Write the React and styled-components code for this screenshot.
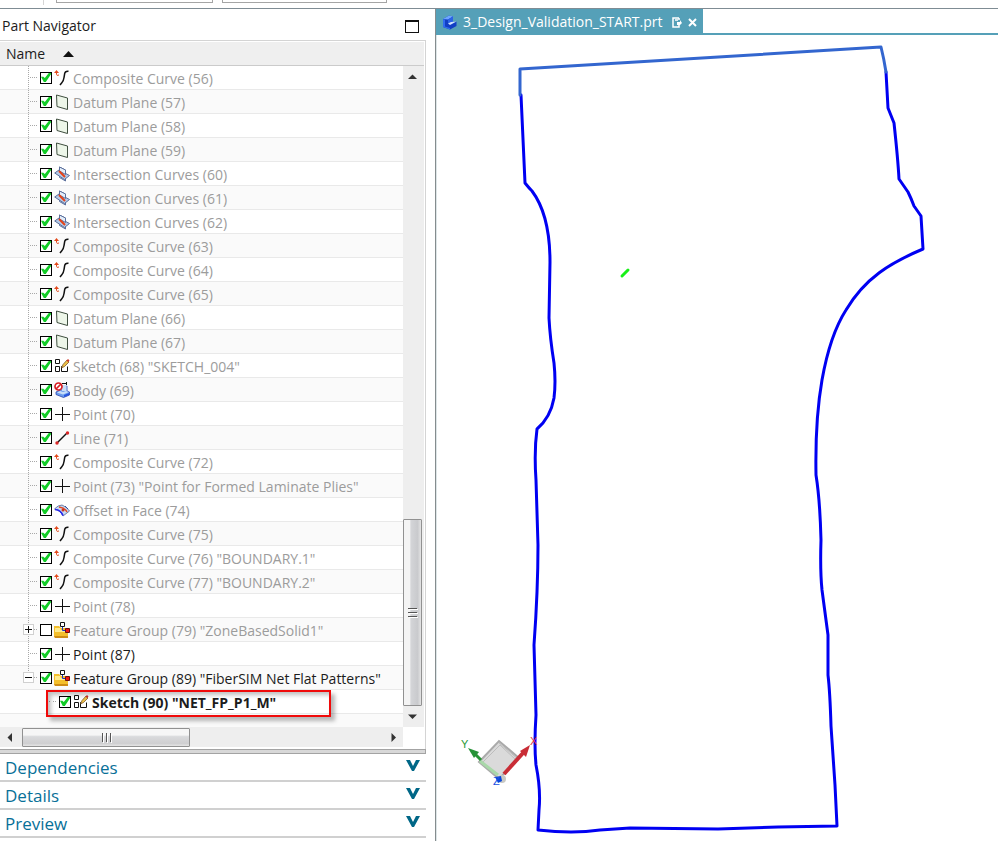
import React, { useState } from "react";
import styled, { createGlobalStyle, css } from "styled-components";

const GlobalStyle = createGlobalStyle`
  *, *::before, *::after { box-sizing: border-box; }
  body { margin: 0; background: #fff; }
  button { font: inherit; color: inherit; background: none; border: 0; padding: 0; }
  ul { list-style: none; margin: 0; padding: 0; }
`;

const Window = styled.div`
  display: flex;
  flex-direction: column;
  min-height: 100vh;
  overflow: hidden;
  font-family: "Open Sans", "Noto Sans", sans-serif;
  font-size: 14px;
  line-height: 24px;
  color: #1c1c1c;
`;

const Toolbar = styled.div`
  display: flex;
  align-items: flex-start;
  height: 9px;
  border-bottom: 1px solid #7f8c94;
`;

const ToolbarDivider = styled.div`
  width: 1px;
  height: 5px;
  margin: 0 12px 0 43px;
  background: #d5d5d5;
`;

const ToolbarField = styled.div`
  width: ${(p) => (p.$wide ? "165px" : "157px")};
  height: 3px;
  margin-right: 9px;
  border: 1px solid #a5a5a5;
  border-top: 0;
`;

const Workspace = styled.div`
  display: flex;
  flex: 1;
`;

const Navigator = styled.aside`
  display: flex;
  flex-direction: column;
  flex: 0 0 436px;
  padding-right: 9px;
  border-right: 1px solid #858c8e;
`;

const TitleBar = styled.header`
  display: flex;
  align-items: center;
  justify-content: space-between;
  height: 31px;
  padding: 3px 7px 0 2px;
`;

const Title = styled.h1`
  margin: 0;
  font-size: 14px;
  font-weight: 400;
`;

const MaximizeButton = styled.button`
  width: 14px;
  height: 13px;
  border: 1px solid #111;
  border-top-width: 2px;
`;

const TreePanel = styled.section`
  border-top: 1px solid #d4d4d4;
  border-right: 1px solid #d4d4d4;
  padding: 1px 1px 2px 0;
`;

const ColumnHeader = styled.button`
  display: flex;
  align-items: center;
  gap: 18px;
  width: 100%;
  height: 24px;
  padding: 1px 6px 0;
  background: #efefef;
  border-bottom: 1px solid #cbcbcb;
`;

const TreeBody = styled.div`
  display: grid;
  grid-template-columns: 1fr 21px;
`;

const TreeList = styled.ul`
  padding-bottom: 13px;
  background: #fafafa;
`;

const TreeRow = styled.li`
  position: relative;
  display: flex;
  align-items: center;
  height: 24px;
  padding-left: ${(p) => (p.$nested ? "47px" : "23px")};
  border-bottom: 1px solid #e9e9e9;
  background: #fff;
  color: ${(p) => (p.$active ? "#1c1c1c" : "#9c9c9c")};
  font-weight: ${(p) => (p.$nested ? 700 : 400)};
  &:nth-child(even) { background: #fafafa; }
`;

const dots = "#b0b0b0 1px, transparent 1px, transparent 2px";

const Branch = styled.span`
  display: flex;
  align-items: center;
  justify-content: center;
  width: 11px;
  height: 24px;
  background: repeating-linear-gradient(to bottom, #a0a0a0 0, ${dots}) 5px 0 / 1px
    ${(p) => (p.$last ? "12px" : "24px")} no-repeat;
`;

const Twig = styled.span`
  width: ${(p) => (p.$long ? "8px" : "4px")};
  height: 1px;
  margin: 0 2px 0 ${(p) => (p.$long ? "-4px" : "0")};
  background: repeating-linear-gradient(to right, #a0a0a0 0, ${dots});
`;

const Expander = styled.button`
  width: 11px;
  height: 11px;
  border: 1px solid #d0d0d0;
  color: #111;
  background:
    linear-gradient(currentColor, currentColor) center / 7px 1px no-repeat,
    ${(p) => (p.$open ? "" : "linear-gradient(currentColor, currentColor) center / 1px 7px no-repeat,")}
    linear-gradient(#fff, #fff);
`;

const ItemLabel = styled.label`
  display: flex;
  align-items: center;
  white-space: nowrap;
`;

const ItemText = styled.span`
  padding-top: 2px;
`;

const CheckBox = styled.input`
  appearance: none;
  flex: none;
  width: 12px;
  height: 12px;
  margin: 0 2px 0 0;
  border: 1px solid #000;
  outline: 0;
  background: #fff;
  &:checked::before {
    content: "";
    display: block;
    width: 10px;
    height: 10px;
    background: #12cc27;
    clip-path: polygon(0 42%, 24% 42%, 38% 56%, 78% 4%, 100% 4%, 100% 18%, 48% 94%, 28% 94%);
  }
`;

const Glyph = styled.svg`
  flex: none;
  width: 16px;
  height: 16px;
  margin-right: 3px;
`;

const Callout = styled.span`
  position: absolute;
  top: 0;
  left: 46px;
  width: 285px;
  height: 27px;
  z-index: 1;
  border: 2px solid #f00a0a;
  box-shadow: 4px 4px 4px #00000045, inset 3px 3px 4px #00000040;
  pointer-events: none;
`;

const Scrollbar = styled.div`
  display: flex;
  align-items: center;
  background: #eeeeee;
  ${(p) =>
    p.$vertical
      ? css`
          flex-direction: column;
          align-items: flex-start;
        `
      : css`
          height: 20px;
          margin-right: 21px;
        `}
`;

const Arrow = styled.button`
  display: flex;
  align-items: center;
  justify-content: center;
  flex: none;
  width: 19px;
  height: ${(p) => (p.$tall ? "21px" : "19px")};
`;

const Space = styled.div`
  flex: 1;
`;

const Thumb = styled.div`
  display: flex;
  align-items: center;
  justify-content: center;
  gap: 3px;
  flex: none;
  border: 1px solid #919191;
  border-radius: 1px;
  ${(p) =>
    p.$vertical
      ? css`
          flex-direction: column;
          width: 19px;
          height: 187px;
          background: linear-gradient(to right, #f4f4f4 35%, #d4d5d8 40%, #c9cacd 80%, #e4e4e4);
        `
      : css`
          width: 168px;
          height: 19px;
          margin-left: 3px;
          background: linear-gradient(#f6f6f6 35%, #d9dadc 45%, #cfcfd1 85%, #e5e5e5);
        `}
`;

const Grip = styled.i`
  width: ${(p) => (p.$vertical ? "9px" : "1px")};
  height: ${(p) => (p.$vertical ? "1px" : "9px")};
  background: #555;
  box-shadow: 1px 1px 0 #fff;
`;

const Splitter = styled.div`
  height: 5px;
  border: 1px solid #a3a3a3;
  border-left: 0;
  background: #d8d8d8;
`;

const Section = styled.button`
  display: flex;
  align-items: center;
  justify-content: space-between;
  height: 28px;
  padding: 2px 6px 0 5px;
  border-bottom: 2px solid #d0d0d0;
  color: #087098;
  font-size: 17px;
`;

const Chevron = styled.svg`
  width: 14px;
  height: 12px;
  margin-bottom: 4px;
`;

const Graphics = styled.main`
  flex: 1;
  min-width: 0;
`;

const TabStrip = styled.nav`
  display: flex;
  height: 26px;
  border-bottom: 2px solid #55a0b8;
`;

const Tab = styled.div`
  display: flex;
  align-items: center;
  gap: 6px;
  height: 26px;
  padding: 0 5px 0 6px;
  background: #55a0b8;
  color: #fff;
  white-space: nowrap;
`;

const TabTitle = styled.span`
  padding-right: 4px;
`;

const TabButton = styled.button`
  display: flex;
  width: 10px;
  height: 12px;
  align-items: center;
`;

const Canvas = styled.svg`
  display: block;
  width: 100%;
`;

const icons = {
  composite: (
    <>
      <path d="M2.500 1v3.500q0 1.500 2.500.5" fill="none" stroke="#e34a1c" />
      <path d="M0 3l2.500-3L5 3z" fill="#e34a1c" />
      <path d="M14.500 1.300Q11 1 10.700 3.500L10 7.500Q9.500 11 8 12.500L6 15" fill="none" stroke="#111" strokeWidth="1.500" />
    </>
  ),
  plane: <path d="M2.500 1l11 3v11.500l-10.500-3z" fill="#edf6e9" stroke="#3f4f3f" strokeWidth="1" />,
  intersect: (
    <>
      <path d="M5.500 1l6 3v11l-6-3.500z" fill="#c9daf0" stroke="#5b6f9c" />
      <path d="M.7 7L5 4l10.500 5.500-5 4z" fill="#b4cae8" stroke="#5b6f9c" />
      <path d="M5.500 1l6 3v4.500l-6-3.500z" fill="#e2edf9" stroke="#5b6f9c" />
      <path d="M5 5l6 6" stroke="#e64116" strokeWidth="2" />
    </>
  ),
  sketch: (
    <>
      <path d="M1.500 1.500h4v4h-4zM1.500 8.500h4v5h-4zM8 8.500h-.5v5h6v-5" fill="#fff" stroke="#111" />
      <path d="M7.500 10l1.500-3.500L13 2l2 2-4.500 4.500z" fill="#ecc046" stroke="#70481e" strokeWidth=".7" />
      <path d="M12.500 2.500l1.500-1.500 1.500 1.500L14 4z" fill="#cf342a" />
    </>
  ),
  body: (
    <>
      <path d="M2 10l4-2V4h7v5l2.500 1v3l-6 2.500L2 12.500z" fill="#6b9ced" stroke="#2945ae" strokeWidth=".8" />
      <path d="M8 3h4.500v6H8zM3 10.500l6 2 6-2.500-3-1-3 1-3-1z" fill="#c7def8" />
      <path d="M10 13l5-2v2l-5 2z" fill="#2654df" />
      <path d="M8 1.500h5M12.500 0v3" stroke="#111" />
      <circle cx="4.500" cy="4.500" r="3.500" fill="#fff" stroke="#d81e22" strokeWidth="1.700" />
      <path d="M7 2L2 7" stroke="#d81e22" strokeWidth="1.700" />
    </>
  ),
  point: <path d="M8.500 1v14M1 8.500h15" stroke="#111" strokeWidth="1" shapeRendering="crispEdges" />,
  line: (
    <>
      <path d="M3 13L13 3" stroke="#111" strokeWidth="1.500" />
      <circle cx="3" cy="13" r="1.700" fill="#da2626" />
      <circle cx="13.500" cy="3" r="1.700" fill="#da2626" />
    </>
  ),
  offset: (
    <>
      <path d="M.5 7Q4 3 8 3q5 2 7.500 6L9 14Q6 8 .5 7z" fill="#c6d8f1" stroke="#7082a8" />
      <path d="M1 7.500q6 .5 8 6" fill="none" stroke="#2424ee" strokeWidth="1.700" />
      <path d="M5 5q6 1 8 5" fill="none" stroke="#e34a24" strokeWidth="1.500" />
      <circle cx="9" cy="8" r="1.500" fill="#c9341f" />
      <path d="M11 4l3 3" stroke="#354f9e" />
    </>
  ),
  group: (
    <>
      <path d="M0 4h5l2 2h7v10H1L0 14z" fill="#f4bf2c" />
      <path d="M1 6h5l1 2h6v2H1z" fill="#ffeb8c" />
      <path d="M0 14h14v2H1z" fill="#cf8c14" />
      <path d="M8.500 4v4.500H12" fill="none" stroke="#1735c7" />
      <path d="M6.500.5h4v4h-4z" fill="#fff" stroke="#111" />
      <path d="M11.500 6.500h4v4h-4z" fill="#ee1515" stroke="#680e0e" />
    </>
  ),
};

const Icon = ({ kind }) => (
  <Glyph viewBox="0 0 16 16" aria-hidden="true">{icons[kind]}</Glyph>
);

const item = (kind, text, extra) => ({ kind, text, ...extra });
const items = [
  item("composite", "Composite Curve (56)"),
  item("plane", "Datum Plane (57)"),
  item("plane", "Datum Plane (58)"),
  item("plane", "Datum Plane (59)"),
  item("intersect", "Intersection Curves (60)"),
  item("intersect", "Intersection Curves (61)"),
  item("intersect", "Intersection Curves (62)"),
  item("composite", "Composite Curve (63)"),
  item("composite", "Composite Curve (64)"),
  item("composite", "Composite Curve (65)"),
  item("plane", "Datum Plane (66)"),
  item("plane", "Datum Plane (67)"),
  item("sketch", 'Sketch (68) "SKETCH_004"'),
  item("body", "Body (69)"),
  item("point", "Point (70)"),
  item("line", "Line (71)"),
  item("composite", "Composite Curve (72)"),
  item("point", 'Point (73) "Point for Formed Laminate Plies"'),
  item("offset", "Offset in Face (74)"),
  item("composite", "Composite Curve (75)"),
  item("composite", 'Composite Curve (76) "BOUNDARY.1"'),
  item("composite", 'Composite Curve (77) "BOUNDARY.2"'),
  item("point", "Point (78)"),
  item("group", 'Feature Group (79) "ZoneBasedSolid1"', { off: true, group: "closed" }),
  item("point", "Point (87)", { active: true }),
  item("group", 'Feature Group (89) "FiberSIM Net Flat Patterns"', { active: true, group: "open" }),
  item("sketch", 'Sketch (90) "NET_FP_P1_M"', { active: true, nested: true }),
];

function TreeItem({ data }) {
  const [checked, setChecked] = useState(!data.off);
  return (
    <TreeRow $active={data.active} $nested={data.nested}>
      {!data.nested && (
        <Branch $last={data.group === "open"}>
          {data.group && (
            <Expander
              $open={data.group === "open"}
              aria-label={data.group === "open" ? "Collapse" : "Expand"}
            />
          )}
        </Branch>
      )}
      <Twig $long={!data.group && !data.nested} />
      {data.nested && <Twig />}
      <ItemLabel>
        <CheckBox type="checkbox" checked={checked} onChange={(e) => setChecked(e.target.checked)} />
        <Icon kind={data.kind} />
        <ItemText>{data.text}</ItemText>
      </ItemLabel>
      {data.nested && <Callout />}
    </TreeRow>
  );
}

const arrowPaths = {
  up: "M0 7l4.500-4.500L9 7z",
  down: "M0 2.500h9L4.500 7z",
  left: "M7 0v9L2.500 4.500z",
  right: "M2.500 0v9L7 4.500z",
};

const ScrollArrow = ({ dir }) => (
  <Arrow $tall={dir === "up" || dir === "down"} aria-label={`Scroll ${dir}`}>
    <svg width="9" height="9" aria-hidden="true"><path d={arrowPaths[dir]} fill="#333" /></svg>
  </Arrow>
);

const Grips = ({ vertical }) => [0, 1, 2].map((n) => <Grip key={n} $vertical={vertical} />);

function Drawing() {
  return (
    <Canvas viewBox="436 35 562 806" role="img" aria-label="Net flat pattern">
      <path d="M436.500 35V841" stroke="#dde5e7" />
      <g fill="none" stroke="#0000f2" strokeWidth="3" strokeLinejoin="round" strokeLinecap="round">
        <path d="M521 95L525 183Q529 188 532 191C544 207 550 232 550 262L549 318Q550 338 554 363Q556 382 554 398C551 415 544 423 537 429Q534 451 536 480L538 545Q538 590 534 645L536 715Q534 745 536 765Q541 790 539 810L538 830Q573 834 600 830L630 828L718 829L778 827L837 826L835 785L831 726Q830 692 828 675L828 635L822 590Q820 570 821 540Q820 500 816 475Q815 420 822 380Q830 335 846 310C865 278 890 263 923 249L921 216L914 206Q911 198 908 192L899 179Q898 160 894 123L888 108L886 72" />
        <path d="M520 95L520 69L881 47Q884 59 886 72" stroke="#3366cf" />
        <path d="M622 276L628 270" stroke="#18f018" />
      </g>
      <path d="M479 762L499 741L519 758L499 779z" fill="#dadada" stroke="#aaa" strokeWidth="2" />
      <path d="M481 764L500 745L516 760M499 743L519 760" fill="none" stroke="#bcbcbc" />
      <path d="M480 761L498 775" stroke="#a9d8a9" strokeWidth="3" />
      <path d="M474 753L481 760" stroke="#289537" strokeWidth="3" />
      <path d="M468 748L479 752L474 758z" fill="#279338" />
      <circle cx="502" cy="779" r="4" fill="#c9c9c4" />
      <path d="M504 774L523 753" stroke="#c92d36" strokeWidth="4" />
      <path d="M530 745L520 751L526 757z" fill="#c92d36" />
      <path d="M495 777L501 776L502 781L498 783z" fill="#0846dc" />
      <g fontFamily="Liberation Sans, sans-serif" fontSize="11">
        <text x="461" y="748" fill="#2a9b37">Y</text>
        <text x="530" y="745" fill="#df353e">X</text>
        <text x="493" y="785" fill="#1c51df">Z</text>
      </g>
    </Canvas>
  );
}

export default function App() {
  return (
    <>
      <GlobalStyle />
      <Window>
        <Toolbar>
          <ToolbarDivider /><ToolbarField /><ToolbarField $wide />
        </Toolbar>
        <Workspace>
          <Navigator>
            <TitleBar>
              <Title>Part Navigator</Title>
              <MaximizeButton aria-label="Maximize" />
            </TitleBar>
            <TreePanel>
              <ColumnHeader>
                Name
                <svg width="11" height="6" aria-hidden="true"><path d="M0 6l5.500-6L11 6z" fill="#111" /></svg>
              </ColumnHeader>
              <TreeBody>
                <TreeList>{items.map((data) => <TreeItem key={data.text} data={data} />)}</TreeList>
                <Scrollbar $vertical>
                  <ScrollArrow dir="up" />
                  <Space />
                  <Thumb $vertical><Grips vertical /></Thumb>
                  <ScrollArrow dir="down" />
                </Scrollbar>
              </TreeBody>
              <Scrollbar>
                <ScrollArrow dir="left" />
                <Thumb><Grips /></Thumb>
                <Space />
                <ScrollArrow dir="right" />
              </Scrollbar>
            </TreePanel>
            <Splitter />
            {["Dependencies", "Details", "Preview"].map((name) => (
              <Section key={name}>
                {name}
                <Chevron viewBox="0 0 14 12" aria-hidden="true">
                  <path d="M0 0h4l3 6 3-6h4L8 11H6z" fill="#006787" />
                </Chevron>
              </Section>
            ))}
          </Navigator>
          <Graphics>
            <TabStrip>
              <Tab>
                <svg width="15" height="15" viewBox="0 0 15 15" aria-hidden="true">
                  <path d="M1 4l6-3.500 4 1V7l3.500-.5V11L8 14.500 1 12z" fill="#123fc4" />
                  <path d="M1 4l6-3.500 4 1L6 4.500z" fill="#6ea6ff" />
                  <path d="M6 4.500l5-3V7L8 9l-2-.5z" fill="#2a63e6" />
                  <path d="M6 8.500l3-1.500 5.500-.5L8 10z" fill="#cfe2ff" />
                  <path d="M1 4l2 .5v7L8 13v1.500L1 12z" fill="#2f6cf0" />
                </svg>
                <TabTitle>3_Design_Validation_START.prt</TabTitle>
                <TabButton aria-label="Modified">
                  <svg width="10" height="12" aria-hidden="true">
                    <path d="M7 2H1v9h6V9M3 4h3M7 2v2" fill="none" stroke="#fff" strokeWidth="1.500" />
                    <path d="M5 6h3V4l2 3-2 2H5z" fill="#fff" />
                  </svg>
                </TabButton>
                <TabButton aria-label="Close">
                  <svg width="9" height="9" aria-hidden="true"><path d="M1 1l7 7M8 1L1 8" stroke="#fff" strokeWidth="2" /></svg>
                </TabButton>
              </Tab>
            </TabStrip>
            <Drawing />
          </Graphics>
        </Workspace>
      </Window>
    </>
  );
}
